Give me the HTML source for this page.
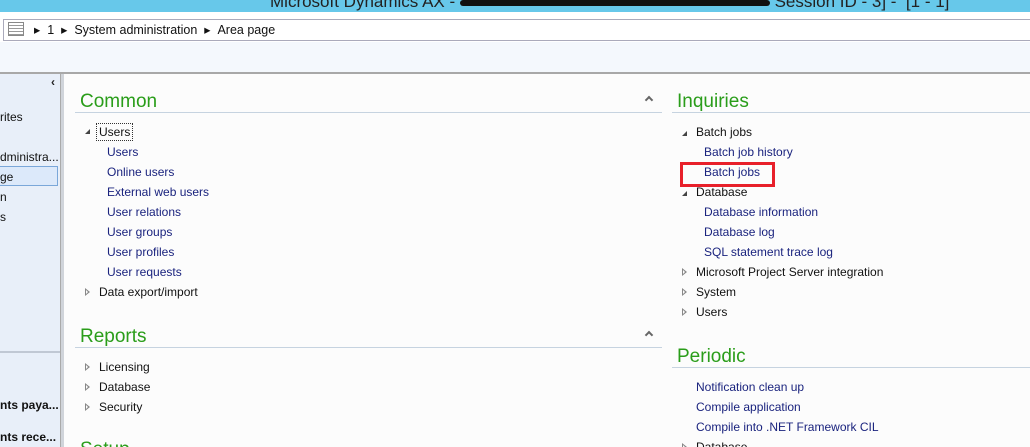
<!DOCTYPE html>
<html><head><style>
*{margin:0;padding:0;box-sizing:border-box}
html,body{width:1030px;height:447px;overflow:hidden}
body{background:#fcfcfc;font-family:"Liberation Sans",sans-serif;position:relative}
.a{position:absolute;white-space:nowrap}
.t{font-size:12px;color:#111}
.l{font-size:12px;color:#1a237e}
.h{font-size:19px;color:#2a9d1a}
.line{position:absolute;height:1px;background:#c6d3e0}
.tri{position:absolute;width:0;height:0}
.exp{border-left:5px solid transparent;border-bottom:5px solid #444}
.col{border-top:4px solid transparent;border-bottom:4px solid transparent;border-left:5px solid #888}
.col::after{content:"";position:absolute;left:-4px;top:-2px;border-top:2px solid transparent;border-bottom:2px solid transparent;border-left:2px solid #fcfcfc}
.car{position:absolute;width:6px;height:6px;border-left:2px solid #666;border-top:2px solid #666;transform:rotate(45deg)}
</style></head><body>
<div class="a" style="left:0;top:0;width:1030px;height:12px;background:#67c8ea"></div>
<div class="a" style="left:270px;top:-8px;font-size:17px;color:#222">Microsoft Dynamics AX - <span style="display:inline-block;width:310px;height:6px;background:#111;vertical-align:middle;border-radius:3px"></span> Session ID - 3] -&nbsp; [1 - 1]</div>
<div class="a" style="left:0;top:12px;width:1030px;height:30px;background:#fff"></div>
<div class="a" style="left:3px;top:19px;width:1027px;height:22px;border:1px solid #aab;border-right:none;background:#fff"></div>
<div class="a" style="left:8px;top:22px;width:16px;height:14px;border:1px solid #888;background:repeating-linear-gradient(#fff 0 2px,#999 2px 3px)"></div>
<div class="a t" style="left:34px;top:22px;font-size:12.5px">▸ &nbsp;1 &nbsp;▸ &nbsp;System administration &nbsp;▸ &nbsp;Area page</div>
<div class="a" style="left:0;top:42px;width:1030px;height:30px;background:#f4f8fd"></div>
<div class="a" style="left:0;top:72px;width:1030px;height:2px;background:#a8a8a8"></div>
<div class="a" style="left:0;top:74px;width:60px;height:373px;background:#e8eff9"></div>
<div class="a" style="left:60px;top:74px;width:4px;height:373px;background:#d0d4da;border-left:1px solid #aaa"></div>
<div class="a" style="left:51px;top:75px;font-size:12px;font-weight:bold;color:#222">‹</div>
<div class="a t" style="left:0;top:110px">rites</div>
<div class="a t" style="left:0;top:150px">dministra...</div>
<div class="a" style="left:-2px;top:166px;width:60px;height:20px;border:1px solid #7aa7d9;background:#dce9fa"></div>
<div class="a t" style="left:0;top:170px">ge</div>
<div class="a t" style="left:0;top:190px">n</div>
<div class="a t" style="left:0;top:210px">s</div>
<div class="a" style="left:0;top:351px;width:60px;height:2px;background:#c0c8d4"></div>
<div class="a t" style="left:0;top:398px;font-weight:bold">nts paya...</div>
<div class="a t" style="left:0;top:430px;font-weight:bold">nts rece...</div>

<div class="a h" style="left:80px;top:91px">Common</div>
<div class="line" style="left:75px;top:112px;width:587px"></div>
<div class="car" style="left:646px;top:97px"></div>
<div class="tri exp" style="left:85px;top:129px"></div>
<div class="a t" style="left:96px;top:123px;border:1px dotted #333;padding:1px 2px">Users</div>
<div class="a l" style="left:107px;top:145px">Users</div>
<div class="a l" style="left:107px;top:165px">Online users</div>
<div class="a l" style="left:107px;top:185px">External web users</div>
<div class="a l" style="left:107px;top:205px">User relations</div>
<div class="a l" style="left:107px;top:225px">User groups</div>
<div class="a l" style="left:107px;top:245px">User profiles</div>
<div class="a l" style="left:107px;top:265px">User requests</div>
<div class="tri col" style="left:85px;top:288px"></div>
<div class="a t" style="left:99px;top:285px">Data export/import</div>

<div class="a h" style="left:80px;top:326px">Reports</div>
<div class="line" style="left:75px;top:347px;width:587px"></div>
<div class="car" style="left:646px;top:332px"></div>
<div class="tri col" style="left:85px;top:363px"></div><div class="a t" style="left:99px;top:360px">Licensing</div>
<div class="tri col" style="left:85px;top:383px"></div><div class="a t" style="left:99px;top:380px">Database</div>
<div class="tri col" style="left:85px;top:403px"></div><div class="a t" style="left:99px;top:400px">Security</div>
<div class="a h" style="left:80px;top:439px">Setup</div>

<div class="a h" style="left:677px;top:91px">Inquiries</div>
<div class="line" style="left:672px;top:112px;width:358px"></div>
<div class="tri exp" style="left:682px;top:131px"></div><div class="a t" style="left:696px;top:125px">Batch jobs</div>
<div class="a l" style="left:704px;top:145px">Batch job history</div>
<div class="a" style="left:680px;top:162px;width:95px;height:25px;border:3px solid #e8202a"></div>
<div class="a l" style="left:704px;top:165px">Batch jobs</div>
<div class="tri exp" style="left:682px;top:191px"></div><div class="a t" style="left:696px;top:185px">Database</div>
<div class="a l" style="left:704px;top:205px">Database information</div>
<div class="a l" style="left:704px;top:225px">Database log</div>
<div class="a l" style="left:704px;top:245px">SQL statement trace log</div>
<div class="tri col" style="left:682px;top:268px"></div><div class="a t" style="left:696px;top:265px">Microsoft Project Server integration</div>
<div class="tri col" style="left:682px;top:288px"></div><div class="a t" style="left:696px;top:285px">System</div>
<div class="tri col" style="left:682px;top:308px"></div><div class="a t" style="left:696px;top:305px">Users</div>

<div class="a h" style="left:677px;top:346px">Periodic</div>
<div class="line" style="left:672px;top:367px;width:358px"></div>
<div class="a l" style="left:696px;top:380px">Notification clean up</div>
<div class="a l" style="left:696px;top:400px">Compile application</div>
<div class="a l" style="left:696px;top:420px">Compile into .NET Framework CIL</div>
<div class="tri col" style="left:682px;top:443px"></div><div class="a t" style="left:696px;top:440px">Database</div>
</body></html>
